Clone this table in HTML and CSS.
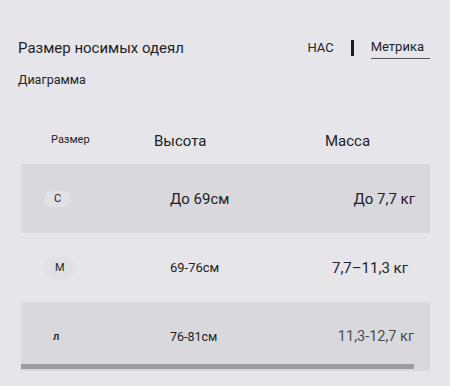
FILE: index.html
```html
<!DOCTYPE html>
<html lang="ru">
<head>
    <meta charset="UTF-8">
    <meta name="viewport" content="width=device-width, initial-scale=1.0">
    <title>Размер носимых одеял</title>
    <link rel="stylesheet" href="styles.css">
</head>
<body>
    <div class="chart">
        <header class="chart-head">
            <div class="titles">
                <h1>Размер носимых одеял</h1>
                <p class="subtitle">Диаграмма</p>
            </div>
            <div class="units">
                <span class="unit">НАС</span>
                <span class="divider"></span>
                <span class="unit active">Метрика</span>
            </div>
        </header>

        <div class="table">
            <div class="row head">
                <div class="cell size">Размер</div>
                <div class="cell height">Высота</div>
                <div class="cell mass">Масса</div>
            </div>
            <div class="row shaded">
                <div class="cell size"><span class="chip">С</span></div>
                <div class="cell height big">До 69см</div>
                <div class="cell mass big">До 7,7 кг</div>
            </div>
            <div class="row">
                <div class="cell size"><span class="chip wide">М</span></div>
                <div class="cell height">69-76см</div>
                <div class="cell mass mid">7,7–11,3 кг</div>
            </div>
            <div class="row shaded last">
                <div class="cell size"><span class="plain">л</span></div>
                <div class="cell height small">76-81см</div>
                <div class="cell mass muted">11,3-12,7 кг</div>
            </div>
            <div class="scrollbar"></div>
        </div>
    </div>
</body>
</html>
```

FILE: styles.css
```css
:root {
    --page-bg: #e6e6ea;
    --row-bg: #d9d9dd;
    --chip-bg: #e1e1e5;
    --text: #222226;
}

* {
    box-sizing: border-box;
    margin: 0;
    padding: 0;
}

body {
    background: var(--page-bg);
    color: var(--text);
    font-family: Roboto, 'Liberation Sans', sans-serif;
    width: 450px;
    height: 386px;
    overflow: hidden;
}

.chart {
    padding: 38px 20px 0 18px;
}

.chart-head {
    display: flex;
    justify-content: space-between;
    align-items: flex-start;
}

h1 {
    font-size: 15px;
    font-weight: 400;
    line-height: 20px;
}

.subtitle {
    font-size: 12.5px;
    line-height: 16px;
    margin-top: 14px;
}

.units {
    display: flex;
    align-items: center;
    gap: 17px;
    margin-top: 1px;
    font-size: 13px;
}

.unit {
    line-height: 16px;
    padding-bottom: 3px;
}

.unit.active {
    border-bottom: 1px solid #55555a;
    padding-right: 6px;
}

.divider {
    width: 3px;
    height: 16px;
    background: #1a1a1a;
    margin-bottom: 2px;
}

.table {
    position: relative;
    margin: 31px 0 0 3px;
}

.row {
    display: grid;
    grid-template-columns: 127px 1fr 1fr;
    align-items: center;
    height: 69px;
}

.row.head {
    height: 45px;
    align-items: start;
    padding-top: 12px;
}

.row.shaded {
    background: var(--row-bg);
}

.cell.size {
    padding-left: 23px;
    font-size: 11px;
}

.row.head .cell.size {
    padding-left: 30px;
    padding-top: 2px;
}

.row.head .cell.height,
.row.head .cell.mass {
    font-size: 15px;
    line-height: 20px;
}

.row.head .cell.height {
    padding-left: 6px;
}

.row.head .cell.mass {
    text-align: left;
    padding-left: 36px;
}

.cell.height {
    font-size: 13px;
    padding-left: 22px;
}

.cell.mass {
    text-align: right;
    padding-right: 15px;
}

.cell.big {
    font-size: 15px;
}

.cell.small {
    font-size: 12.5px;
}

.cell.mass.mid {
    font-size: 15px;
    padding-right: 22px;
}

.cell.mass.muted {
    font-size: 14.5px;
    color: #4a4a50;
    padding-right: 16px;
}

.chip {
    display: inline-block;
    background: var(--chip-bg);
    border-radius: 8px;
    font-size: 11px;
    line-height: 16px;
    padding: 0 10px;
}

.chip.wide {
    padding: 3px 11px;
    border-radius: 11px;
}

.plain {
    display: inline-block;
    padding-left: 9px;
    font-size: 11px;
    font-weight: 500;
}

.scrollbar {
    position: absolute;
    left: 0;
    bottom: 2px;
    width: 393px;
    height: 5px;
    background: #9b9ba0;
}
```
